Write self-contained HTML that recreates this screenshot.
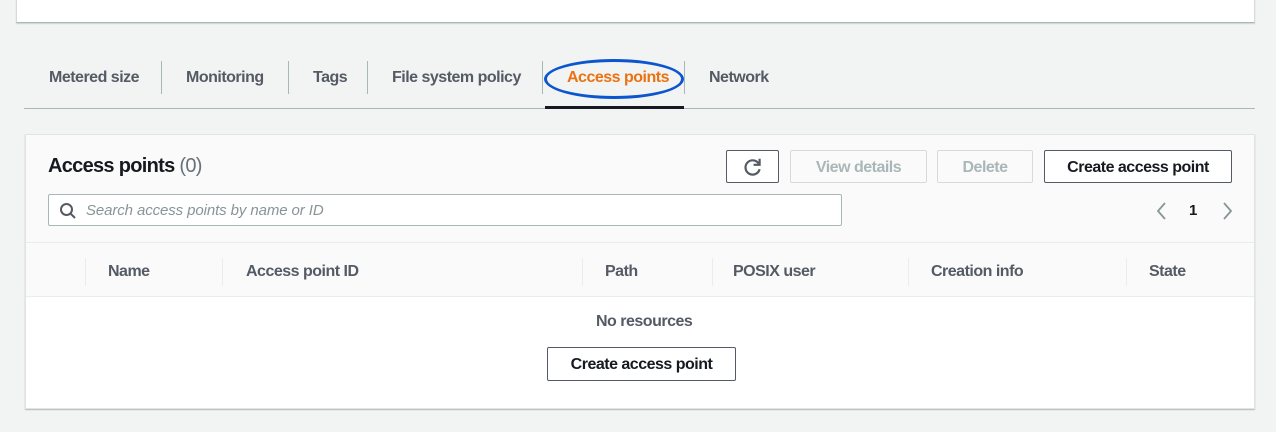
<!DOCTYPE html>
<html><head><style>
*{margin:0;padding:0;box-sizing:border-box}
body{width:1276px;height:432px;background:#f2f3f3;font-family:"Liberation Sans",sans-serif;position:relative;overflow:hidden;color:#545b64}
.a{position:absolute;white-space:nowrap}
.b{font-weight:bold;font-size:16px;letter-spacing:-0.5px}
.sep{position:absolute;width:1px;background:#aab7b8}
.btn{position:absolute;border:1px solid #545b64;border-radius:2px;background:#fff;font-weight:bold;font-size:16px;letter-spacing:-0.5px;color:#16191f;display:flex;align-items:center;justify-content:center;padding-top:2px}
.dis{border-color:#d5dbdb;color:#aab7b8;background:#fafafa}
.th{position:absolute;top:263px;font-weight:bold;font-size:16px;letter-spacing:-0.5px;color:#545b64}
.cs{position:absolute;top:258px;height:28px;width:1px;background:#eaeded}
</style></head><body>
<div class="a" style="left:16px;top:-2px;width:1239px;height:25px;background:#fff;border:1px solid #d5dbdb;border-bottom:1px solid #aab7b8;box-shadow:0 1px 1px rgba(0,0,0,.15)"></div>

<div class="a b" style="left:49px;top:69px">Metered size</div>
<div class="sep" style="left:161px;top:61px;height:33px"></div>
<div class="a b" style="left:186px;top:69px">Monitoring</div>
<div class="sep" style="left:288px;top:61px;height:33px"></div>
<div class="a b" style="left:313px;top:69px">Tags</div>
<div class="sep" style="left:367px;top:61px;height:33px"></div>
<div class="a b" style="left:392px;top:69px">File system policy</div>
<div class="sep" style="left:542px;top:61px;height:33px"></div>
<div class="a b" style="left:567px;top:69px;color:#ec7211">Access points</div>
<div class="a" style="left:544px;top:59px;width:140px;height:40px;border:3px solid #0b55cf;border-radius:50%"></div>
<div class="sep" style="left:684px;top:61px;height:33px"></div>
<div class="a b" style="left:709px;top:69px">Network</div>
<div class="a" style="left:24px;top:108px;width:1231px;height:1px;background:#aab7b8"></div>
<div class="a" style="left:545px;top:106px;width:139px;height:3px;background:#16191f"></div>

<div class="a" style="left:25px;top:134px;width:1230px;height:275px;background:#fff;border:1px solid #e0e4e4;box-shadow:0 1px 1px rgba(0,0,0,.25)"></div>
<div class="a" style="left:26px;top:135px;width:1228px;height:108px;background:#fafafa;border-bottom:1px solid #eaeded"></div>
<div class="a" style="left:26px;top:243px;width:1228px;height:54px;background:#fafafa;border-bottom:1px solid #eaeded"></div>

<div class="a" style="left:48px;top:155px;font-size:20px;font-weight:bold;letter-spacing:-0.7px;color:#16191f">Access points <span style="font-weight:normal;color:#687078">(0)</span></div>

<div class="btn" style="left:726px;top:150px;width:53px;height:33px;padding-top:0"><svg width="22" height="22" viewBox="0 0 20 20"><path d="M15.5 7.5A6.5 6.5 0 1 0 16 12" fill="none" stroke="#545b64" stroke-width="2"/><path d="M16 2.5v5.5h-5.5" fill="none" stroke="#545b64" stroke-width="2"/></svg></div>
<div class="btn dis" style="left:790px;top:150px;width:137px;height:33px">View details</div>
<div class="btn dis" style="left:937px;top:150px;width:96px;height:33px">Delete</div>
<div class="btn" style="left:1044px;top:150px;width:188px;height:33px">Create access point</div>

<div class="a" style="left:48px;top:194px;width:794px;height:32px;border:1px solid #aab7b8;border-radius:2px;background:#fff"></div>
<svg class="a" style="left:58px;top:201px" width="20" height="20" viewBox="0 0 20 20"><circle cx="8.5" cy="8.5" r="5.5" fill="none" stroke="#545b64" stroke-width="2"/><path d="M12.5 12.5l4.5 4.5" stroke="#545b64" stroke-width="2"/></svg>
<div class="a" style="left:86px;top:202px;font-size:15px;font-style:italic;color:#879596;letter-spacing:-0.1px">Search access points by name or ID</div>

<svg class="a" style="left:1154px;top:201px" width="16" height="20" viewBox="0 0 16 20"><path d="M11 2L4 10l7 8" fill="none" stroke="#879596" stroke-width="1.8"/></svg>
<div class="a" style="left:1189px;top:202px;font-weight:bold;font-size:15px;color:#16191f">1</div>
<svg class="a" style="left:1219px;top:201px" width="16" height="20" viewBox="0 0 16 20"><path d="M5 2l7 8-7 8" fill="none" stroke="#879596" stroke-width="1.8"/></svg>

<div class="cs" style="left:85px"></div>
<div class="th" style="left:108px">Name</div>
<div class="cs" style="left:222px"></div>
<div class="th" style="left:246px">Access point ID</div>
<div class="cs" style="left:582px"></div>
<div class="th" style="left:605px">Path</div>
<div class="cs" style="left:712px"></div>
<div class="th" style="left:733px">POSIX user</div>
<div class="cs" style="left:908px"></div>
<div class="th" style="left:931px">Creation info</div>
<div class="cs" style="left:1126px"></div>
<div class="th" style="left:1149px">State</div>

<div class="a b" style="left:596px;top:313px;color:#545b64">No resources</div>
<div class="btn" style="left:547px;top:347px;width:189px;height:34px">Create access point</div>
</body></html>
